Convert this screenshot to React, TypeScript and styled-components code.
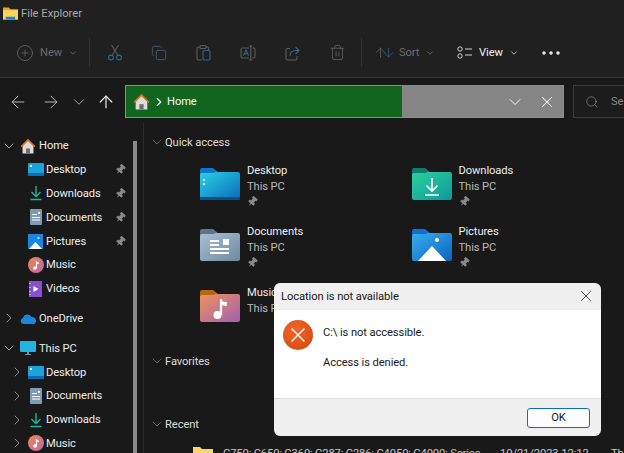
import React from 'react'
import styled, { createGlobalStyle } from 'styled-components'
import {
  ArrowDown,
  ArrowLeft,
  ArrowRight,
  ArrowUp,
  ChevronDown,
  ChevronRight,
  CirclePlus,
  Copy,
  MoreHorizontal,
  Pin,
  Search,
  Trash2,
  X,
} from 'lucide-react'

const GlobalStyle = createGlobalStyle`
  html, body { margin: 0; padding: 0; background: #191919; }
  body { font-family: Roboto, "Open Sans", "Liberation Sans", sans-serif; font-size: 11.2px; letter-spacing: -0.1px; color: #e8e8e8; overflow: hidden; }
  svg { flex: none; }
`

const Window = styled.div`
  position: relative;
  width: 624px;
  height: 453px;
  overflow: hidden;
  display: flex;
  flex-direction: column;
  background: #191919;
`

const TitleBar = styled.div`
  height: 26px;
  background: #202020;
  display: flex;
  align-items: center;
  gap: 3px;
  padding-left: 3px;
  box-sizing: border-box;
  color: #a9a9a9;
  letter-spacing: 0;
  flex: none;
`

const Toolbar = styled.div`
  height: 52px;
  box-sizing: border-box;
  background: #202020;
  border-bottom: 1px solid #333;
  display: flex;
  align-items: center;
  flex: none;
  padding: 2px 0 0 16px;
  color: #6c6c6c;
`

const ToolGroup = styled.div<{ $w: number }>`
  width: ${(p) => p.$w}px;
  flex: none;
  display: flex;
  align-items: center;
  gap: 6px;
`

const ToolSlot = styled.div`
  width: 44.5px;
  flex: none;
  display: flex;
  justify-content: center;
`

const ToolDivider = styled.div<{ $l: number; $r: number }>`
  width: 1px;
  height: 29px;
  margin: 0 ${(p) => p.$r}px 0 ${(p) => p.$l}px;
  background: #303030;
  flex: none;
`

const ToolLabel = styled.span<{ $on?: boolean }>`
  color: ${(p) => (p.$on ? '#f2f2f2' : '#6c6c6c')};
`

const SortGlyph = styled.span`
  display: flex;
  margin: 0 -3px 0 -2px;
  & > svg + svg {
    margin-left: -7px;
  }
`

const NavRow = styled.div`
  height: 45px;
  background: #191919;
  display: flex;
  align-items: center;
  flex: none;
  padding-top: 2px;
  box-sizing: border-box;
`

const NavButtons = styled.div`
  width: 125px;
  flex: none;
  display: flex;
  align-items: center;
  padding-left: 1px;
  box-sizing: border-box;
`

const NavSlot = styled.span<{ $w: number }>`
  width: ${(p) => p.$w}px;
  display: flex;
  justify-content: center;
  flex: none;
`

const Address = styled.div`
  width: 439px;
  height: 33px;
  flex: none;
  box-sizing: border-box;
  border: 1px solid #8c8c8c;
  background: linear-gradient(to right, #11651f 0, #11651f 276px, #858585 276px);
  display: flex;
  align-items: center;
  padding-left: 7px;
  color: #f5f5f5;
`

const AddressSep = styled.span`
  display: flex;
  margin: 0 1px 0 2px;
`

const AddressText = styled.span`
  flex: 1;
`

const AddressAction = styled.span`
  width: 32px;
  display: flex;
  justify-content: center;
`

const SearchBox = styled.div`
  margin-left: 9px;
  width: 80px;
  height: 33px;
  flex: none;
  box-sizing: border-box;
  border: 1px solid #3a3a3a;
  background: #1c1c1c;
  display: flex;
  align-items: center;
  gap: 12px;
  padding-left: 11px;
  color: #8a8a8a;
`

const Body = styled.div`
  flex: 1;
  display: flex;
  min-height: 0;
`

const Sidebar = styled.div`
  width: 133px;
  flex: none;
  padding-top: 11px;
  box-sizing: border-box;
`

const Scroll = styled.div`
  width: 4px;
  background: #8a8a8a;
  margin-top: 18px;
  flex: none;
`

const PaneDivider = styled.div`
  width: 1px;
  background: #2c2c2c;
  margin-left: 6px;
  flex: none;
`

const TreeRow = styled.div<{ $level: number; $gap?: number }>`
  height: 23.8px;
  margin-bottom: ${(p) => p.$gap ?? 0}px;
  display: flex;
  align-items: center;
  padding-left: ${(p) => (p.$level ? 9 : 1)}px;
  color: #ececec;
`

const Twisty = styled.span`
  width: 16px;
  flex: none;
  display: flex;
  color: #a8a8a8;
`

const TreeIcon = styled.span<{ $level: number }>`
  width: 21px;
  padding-right: ${(p) => (p.$level ? 0 : 2)}px;
  margin-left: ${(p) => (p.$level ? 0 : 1)}px;
  box-sizing: border-box;
  flex: none;
  display: flex;
  align-items: center;
  justify-content: center;
`

const TreePin = styled.span`
  margin-left: auto;
  margin-right: 7px;
  display: flex;
  color: #8b8b8b;
`

const PinGlyph = styled(Pin)`
  transform: rotate(40deg);
`

const Main = styled.div`
  flex: 1;
  padding: 10px 0 0 5px;
  min-width: 0;
`

const Section = styled.div<{ $mb: number }>`
  height: 18px;
  margin-bottom: ${(p) => p.$mb}px;
  display: flex;
  align-items: center;
  color: #dcdcdc;
  & > svg {
    color: #8a8a8a;
  }
`

const Tiles = styled.div`
  display: grid;
  grid-template-columns: 211.5px 211.5px;
  grid-auto-rows: 61px;
  padding-left: 51px;
  height: 183px;
  margin-bottom: 6px;
`

const Tile = styled.div`
  display: flex;
  gap: 7px;
`

const TileIcon = styled.div`
  width: 40px;
  height: 32px;
  margin-top: 5px;
  flex: none;
`

const TileText = styled.div`
  display: flex;
  flex-direction: column;
  line-height: 15.5px;
`

const TileName = styled.span`
  color: #ececec;
`

const TileSub = styled.span`
  color: #b8b8b8;
`

const TilePin = styled.span`
  display: flex;
  margin-top: 2px;
  color: #8b8b8b;
`

const RecentRow = styled.div`
  display: grid;
  grid-template-columns: 20px 287px 111px 60px;
  padding-left: 44px;
  white-space: nowrap;
  color: #c8c8c8;
  line-height: 15.5px;
  & > svg {
    margin-top: 1px;
  }
`

const RecentName = styled.span`
  margin-left: 10px;
`

const Dialog = styled.div`
  position: absolute;
  left: 274px;
  top: 283px;
  width: 327px;
  height: 153px;
  border-radius: 6px;
  overflow: hidden;
  background: #f0f0f0;
  display: flex;
  flex-direction: column;
  color: #1a1a1a;
`

const DialogTitle = styled.div`
  height: 27px;
  flex: none;
  display: flex;
  align-items: center;
  justify-content: space-between;
  padding: 0 6.5px 1px 7px;
  box-sizing: border-box;
`

const DialogBody = styled.div`
  flex: 1;
  background: #fff;
  border-bottom: 1px solid #dcdcdc;
  display: flex;
  gap: 10px;
  padding: 10px 10px 0 9px;
`

const ErrorBadge = styled.div`
  width: 30px;
  height: 30px;
  flex: none;
  border-radius: 50%;
  background: radial-gradient(circle at 40% 35%, #f0682a, #d4420b);
  display: flex;
  align-items: center;
  justify-content: center;
  color: #fff;
`

const Message = styled.div`
  padding-top: 5px;
  display: flex;
  flex-direction: column;
  gap: 14px;
  line-height: 16px;
`

const DialogFooter = styled.div`
  height: 37px;
  flex: none;
  display: flex;
  align-items: center;
  justify-content: flex-end;
  padding-right: 11px;
`

const OkButton = styled.button`
  width: 63px;
  height: 20px;
  box-sizing: border-box;
  padding: 0;
  border: 1.5px solid #0a6cc4;
  border-radius: 3px;
  background: #fdfdfd;
  font: inherit;
  letter-spacing: inherit;
  color: #1a1a1a;
`

const HomeIcon = ({ size = 16 }: { size?: number }) => (
  <svg width={size} height={size} viewBox="0 0 16 16">
    <path d="M2.5 8v7.5h11V8L8 2.5z" fill="#dcdcdc" />
    <path d="M6 15.5v-5h4v5z" fill="#6e6e6e" />
    <path d="M0.5 8.2 8 .8l7.5 7.4-1.1 1.1L8 3 1.6 9.3z" fill="#e0701c" />
  </svg>
)

const CutIcon = () => (
  <svg width="16" height="17" viewBox="0 0 16 17" fill="none" strokeWidth="1.1">
    <path d="M5.3 11 11.5 1M10.7 11 4.5 1" stroke="#5c5c5c" />
    <circle cx="4" cy="13.5" r="2.4" stroke="#2f6690" />
    <circle cx="12" cy="13.5" r="2.4" stroke="#2f6690" />
  </svg>
)

const PasteIcon = () => (
  <svg width="15" height="17" viewBox="0 0 15 17" fill="none" strokeWidth="1.1">
    <path d="M4 3H2.5A1.5 1.5 0 0 0 1 4.5v10A1.5 1.5 0 0 0 2.5 16H6M10 3h1a1.5 1.5 0 0 1 1.5 1.5V6" stroke="#5c5c5c" />
    <rect x="4" y="1.5" width="6" height="3" rx="1" stroke="#5c5c5c" />
    <rect x="7" y="6.5" width="7" height="9.5" rx="1.2" stroke="#2f6690" />
  </svg>
)

const RenameIcon = () => (
  <svg width="16" height="16" viewBox="0 0 16 16" fill="none" strokeWidth="1.1">
    <path d="M9 3H2.5A1.5 1.5 0 0 0 1 4.5v7A1.5 1.5 0 0 0 2.5 13H9M12.5 3h1A1.5 1.5 0 0 1 15 4.5v7a1.5 1.5 0 0 1-1.5 1.5h-1" stroke="#5c5c5c" />
    <path d="M3.5 10.5 6 5l2.5 5.5M4.5 8.7h3" stroke="#2f6690" />
    <path d="M9.2 1h3.2M10.8 1v14M9.2 15h3.2" stroke="#5c5c5c" />
  </svg>
)

const ShareIcon = () => (
  <svg width="15" height="16" viewBox="0 0 15 16" fill="none" strokeWidth="1.1">
    <path d="M5 3.5H2.5A1.5 1.5 0 0 0 1 5v8.5A1.5 1.5 0 0 0 2.5 15h8a1.5 1.5 0 0 0 1.5-1.5V11" stroke="#5c5c5c" />
    <path d="M5 11c0-3.5 2.5-5.5 6-5.5h3M10.5 2 14 5.5 10.5 9" stroke="#2f6690" />
  </svg>
)

const folderGradients: Record<string, [string, string, string]> = {
  desktop: ['#0b78c9', '#2ad0e8', '#0a6ab8'],
  downloads: ['#0c7f6c', '#2fcf9c', '#0b9a9c'],
  documents: ['#5f7486', '#a9bfd4', '#6f89a3'],
  pictures: ['#0f6ed0', '#36aef0', '#0f63bc'],
  music: ['#b8660f', '#f0925a', '#a060b0'],
}

const Folder = ({ kind }: { kind: string }) => {
  const [tab, from, to] = folderGradients[kind]
  return (
    <svg width="40" height="32" viewBox="0 0 40 32">
      <defs>
        <linearGradient id={`f-${kind}`} x1="0" y1="0" x2="1" y2="1">
          <stop offset="0" stopColor={from} />
          <stop offset="1" stopColor={to} />
        </linearGradient>
      </defs>
      <path d="M0 2a2 2 0 0 1 2-2h11l5 4v4H0z" fill={tab} />
      <path d="M0 7a2 2 0 0 1 2-2h11l3-1h22a2 2 0 0 1 2 2v24a2 2 0 0 1-2 2H2a2 2 0 0 1-2-2z" fill={`url(#f-${kind})`} />
      {kind === 'desktop' && (
        <>
          <rect x="3" y="11" width="2" height="2" fill="#dff" />
          <rect x="3" y="15" width="2" height="2" fill="#dff" />
          <path d="M0 29h40v1a2 2 0 0 1-2 2H2a2 2 0 0 1-2-2z" fill="#0a4f8f" />
        </>
      )}
      {kind === 'downloads' && (
        <path d="M20 10v13M14.5 17.5l5.5 5.5 5.5-5.5M13 27h14" stroke="#fff" strokeWidth="1.6" fill="none" />
      )}
      {kind === 'documents' && (
        <>
          <path d="M10 11h9v2h-9zM10 15h9v2h-9zM10 19h19v2H10zM10 23h19v2H10z" fill="#fff" />
          <rect x="23" y="10" width="6" height="6" fill="#fff" />
        </>
      )}
      {kind === 'pictures' && (
        <>
          <circle cx="25" cy="11" r="2" fill="#fff" />
          <path d="M6 32 20 17l14 15z" fill="#fff" />
        </>
      )}
      {kind === 'music' && (
        <>
          <path d="M21 9v16" stroke="#fff" strokeWidth="2.2" />
          <circle cx="17.5" cy="25" r="4" fill="#fff" />
          <path d="M21 9c1 3 4 3 6 3v4c-3 0-5-1-6-2z" fill="#fff" />
        </>
      )}
    </svg>
  )
}

const SmallIcon = ({ kind, id }: { kind: string; id: number }) => {
  switch (kind) {
    case 'desktop':
      return (
        <svg width="16" height="13" viewBox="0 0 16 13">
          <rect width="16" height="13" rx="1" fill="#1ca3dc" />
          <rect y="10" width="16" height="3" fill="#0d6cb4" />
          <rect x="2" y="2" width="2" height="2" fill="#dff" />
        </svg>
      )
    case 'downloads':
      return (
        <svg width="14" height="16" viewBox="0 0 14 16">
          <path d="M7 1v10M2.5 7 7 11.5 11.5 7M1.5 14.5h11" stroke="#1fb59a" strokeWidth="1.4" fill="none" />
        </svg>
      )
    case 'documents':
      return (
        <svg width="12" height="16" viewBox="0 0 12 16">
          <rect width="12" height="16" rx="1" fill="#7f9ab3" />
          <path d="M2 5h5v1H2zM2 8h8v1H2zM2 10.5h8v1H2z" fill="#fff" />
          <rect x="8" y="3" width="2" height="2" fill="#fff" />
        </svg>
      )
    case 'pictures':
      return (
        <svg width="15" height="15" viewBox="0 0 15 15">
          <rect width="15" height="15" fill="#1a86de" />
          <path d="M1 15 7.5 8l6.5 7z" fill="#fff" />
          <circle cx="10.5" cy="4" r="1" fill="#fff" />
        </svg>
      )
    case 'music':
      return (
        <svg width="16" height="16" viewBox="0 0 16 16">
          <defs>
            <linearGradient id={`m-note-${id}`} x1="0" y1="0" x2="1" y2="1">
              <stop offset="0" stopColor="#ef8a4a" />
              <stop offset="1" stopColor="#b868a8" />
            </linearGradient>
          </defs>
          <circle cx="8" cy="8" r="8" fill={`url(#m-note-${id})`} />
          <path d="M8.5 4v7" stroke="#fff" strokeWidth="1.2" />
          <circle cx="7" cy="11" r="1.8" fill="#fff" />
          <path d="M8.5 4c.5 1 1.5 1.5 2.5 1.5V7c-1 0-2-.5-2.5-1z" fill="#fff" />
        </svg>
      )
    case 'videos':
      return (
        <svg width="13" height="16" viewBox="0 0 13 16">
          <rect width="13" height="16" fill="#8a4fd0" />
          <path d="M4.5 5v6l5-3z" fill="#fff" />
          <path d="M1 2v1M1 6v1M1 10v1M1 13v1" stroke="#fff" strokeWidth="1" />
        </svg>
      )
    case 'onedrive':
      return (
        <svg width="16" height="11" viewBox="0 0 16 11">
          <path d="M3.5 11A3 3 0 0 1 3 5.1 4.6 4.6 0 0 1 11.6 4 3.6 3.6 0 0 1 16 7.5 3.4 3.4 0 0 1 12.7 11z" fill="#1b86e0" />
        </svg>
      )
    default:
      return (
        <svg width="16" height="15" viewBox="0 0 16 15">
          <rect width="16" height="11" rx="1" fill="#22b5e4" />
          <path d="M7 11h2v2h2v1H5v-1h2z" fill="#6f8fa5" />
        </svg>
      )
  }
}

type SidebarRow = { kind: string; label: string; level: number; twisty?: 'down' | 'right'; pin?: boolean; gap?: number }

const sidebarRows: SidebarRow[] = [
  { kind: 'home', label: 'Home', level: 0, twisty: 'down' },
  { kind: 'desktop', label: 'Desktop', level: 1, pin: true },
  { kind: 'downloads', label: 'Downloads', level: 1, pin: true },
  { kind: 'documents', label: 'Documents', level: 1, pin: true },
  { kind: 'pictures', label: 'Pictures', level: 1, pin: true },
  { kind: 'music', label: 'Music', level: 1 },
  { kind: 'videos', label: 'Videos', level: 1, gap: 6 },
  { kind: 'onedrive', label: 'OneDrive', level: 0, twisty: 'right', gap: 6 },
  { kind: 'pc', label: 'This PC', level: 0, twisty: 'down' },
  { kind: 'desktop', label: 'Desktop', level: 1, twisty: 'right' },
  { kind: 'documents', label: 'Documents', level: 1, twisty: 'right' },
  { kind: 'downloads', label: 'Downloads', level: 1, twisty: 'right' },
  { kind: 'music', label: 'Music', level: 1, twisty: 'right' },
]

const tiles = [
  { kind: 'desktop', name: 'Desktop', pin: true },
  { kind: 'downloads', name: 'Downloads', pin: true },
  { kind: 'documents', name: 'Documents', pin: true },
  { kind: 'pictures', name: 'Pictures', pin: true },
  { kind: 'music', name: 'Music', pin: false },
]

export default function App() {
  return (
    <Window>
      <GlobalStyle />
      <TitleBar>
        <svg width="15" height="14" viewBox="0 0 16 14">
          <path d="M0 1h6l2 2h8v11H0z" fill="#f0a818" />
          <path d="M0 4h16v10H0z" fill="#fcd45c" />
          <rect x="3" y="11" width="10" height="3" fill="#1e7fd8" />
        </svg>
        File Explorer
      </TitleBar>
      <Toolbar>
        <ToolGroup $w={73}>
          <CirclePlus size={18} strokeWidth={1} />
          <ToolLabel>New</ToolLabel>
          <ChevronDown size={10} />
        </ToolGroup>
        <ToolDivider $l={0} $r={2.5} />
        <ToolSlot>
          <CutIcon />
        </ToolSlot>
        <ToolSlot>
          <Copy size={16} strokeWidth={1.2} color="#4f6272" />
        </ToolSlot>
        <ToolSlot>
          <PasteIcon />
        </ToolSlot>
        <ToolSlot>
          <RenameIcon />
        </ToolSlot>
        <ToolSlot>
          <ShareIcon />
        </ToolSlot>
        <ToolSlot>
          <Trash2 size={17} strokeWidth={1} />
        </ToolSlot>
        <ToolDivider $l={1.5} $r={13} />
        <ToolGroup $w={82}>
          <SortGlyph>
            <ArrowUp size={15} strokeWidth={1.1} />
            <ArrowDown size={15} strokeWidth={1.1} color="#2f6690" />
          </SortGlyph>
          <ToolLabel>Sort</ToolLabel>
          <ChevronDown size={10} />
        </ToolGroup>
        <ToolGroup $w={82}>
          <svg width="16" height="13" viewBox="0 0 16 13" fill="none" stroke="#cfcfcf">
            <circle cx="3" cy="3" r="2.2" />
            <circle cx="3" cy="10" r="2.2" />
            <path d="M8 3h7M8 9h7" />
          </svg>
          <ToolLabel $on>View</ToolLabel>
          <ChevronDown size={10} color="#cfcfcf" />
        </ToolGroup>
        <MoreHorizontal size={24} strokeWidth={1.5} color="#f0f0f0" />
      </Toolbar>
      <NavRow>
        <NavButtons>
          <NavSlot $w={33}>
            <ArrowLeft size={20} strokeWidth={1.2} color="#b4b4b4" />
          </NavSlot>
          <NavSlot $w={33}>
            <ArrowRight size={20} strokeWidth={1.2} color="#b4b4b4" />
          </NavSlot>
          <NavSlot $w={24}>
            <ChevronDown size={18} strokeWidth={1.3} color="#a0a0a0" />
          </NavSlot>
          <NavSlot $w={30}>
            <ArrowUp size={20} strokeWidth={1.4} color="#f4f4f4" />
          </NavSlot>
        </NavButtons>
        <Address>
          <HomeIcon size={17} />
          <AddressSep>
            <ChevronRight size={14} strokeWidth={2} />
          </AddressSep>
          <AddressText>Home</AddressText>
          <AddressAction>
            <ChevronDown size={20} strokeWidth={1.2} />
          </AddressAction>
          <AddressAction>
            <X size={18} strokeWidth={1.4} />
          </AddressAction>
        </Address>
        <SearchBox>
          <Search size={14} strokeWidth={1.2} />
          Se
        </SearchBox>
      </NavRow>
      <Body>
        <Sidebar>
          {sidebarRows.map((row, i) => (
            <TreeRow key={i} $level={row.level} $gap={row.gap}>
              <Twisty>
                {row.twisty === 'down' && <ChevronDown size={16} strokeWidth={1.4} />}
                {row.twisty === 'right' && <ChevronRight size={16} strokeWidth={1.2} />}
              </Twisty>
              <TreeIcon $level={row.level}>
                {row.kind === 'home' ? <HomeIcon /> : <SmallIcon kind={row.kind} id={i} />}
              </TreeIcon>
              {row.label}
              {row.pin && (
                <TreePin>
                  <PinGlyph size={11} fill="currentColor" />
                </TreePin>
              )}
            </TreeRow>
          ))}
        </Sidebar>
        <Scroll />
        <PaneDivider />
        <Main>
          <Section $mb={12}>
            <ChevronDown size={16} strokeWidth={1} />
            Quick access
          </Section>
          <Tiles>
            {tiles.map((t) => (
              <Tile key={t.name}>
                <TileIcon>
                  <Folder kind={t.kind} />
                </TileIcon>
                <TileText>
                  <TileName>{t.name}</TileName>
                  <TileSub>This PC</TileSub>
                  {t.pin && (
                    <TilePin>
                      <PinGlyph size={11} fill="currentColor" />
                    </TilePin>
                  )}
                </TileText>
              </Tile>
            ))}
          </Tiles>
          <Section $mb={45}>
            <ChevronDown size={16} strokeWidth={1} />
            Favorites
          </Section>
          <Section $mb={13}>
            <ChevronDown size={16} strokeWidth={1} />
            Recent
          </Section>
          <RecentRow>
            <svg width="20" height="14" viewBox="0 0 20 14">
              <path d="M0 0h7l2 2h11v12H0z" fill="#f8d668" />
            </svg>
            <RecentName>C750; C650; C360; C287; C286; C4050; C4000; Series</RecentName>
            <span>10/21/2023 12:12</span>
            <span>This PC</span>
          </RecentRow>
        </Main>
      </Body>
      <Dialog>
        <DialogTitle>
          Location is not available
          <X size={18} strokeWidth={1} />
        </DialogTitle>
        <DialogBody>
          <ErrorBadge>
            <X size={24} strokeWidth={1.4} />
          </ErrorBadge>
          <Message>
            <span>C:\ is not accessible.</span>
            <span>Access is denied.</span>
          </Message>
        </DialogBody>
        <DialogFooter>
          <OkButton>OK</OkButton>
        </DialogFooter>
      </Dialog>
    </Window>
  )
}
